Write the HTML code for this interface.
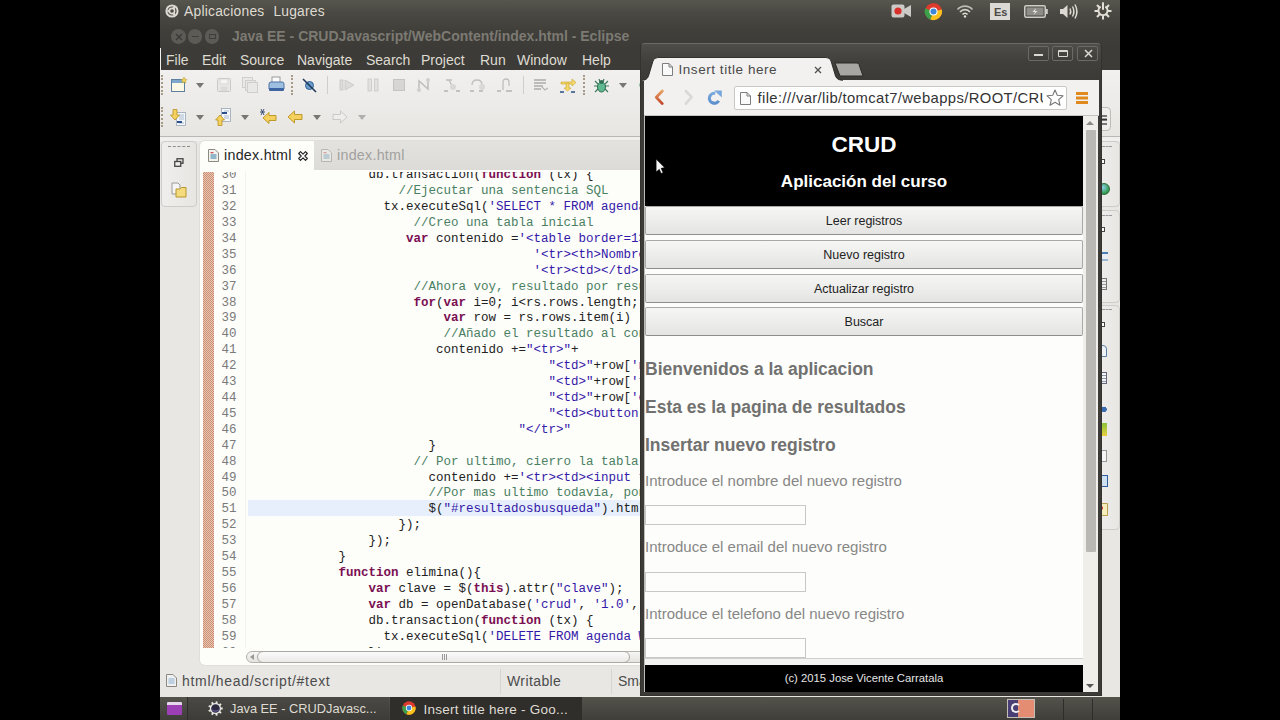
<!DOCTYPE html>
<html><head><meta charset="utf-8">
<style>
*{margin:0;padding:0;box-sizing:border-box}
html,body{width:1280px;height:720px;overflow:hidden;background:#000;font-family:"Liberation Sans",sans-serif}
.a{position:absolute}
.t{position:absolute;white-space:nowrap;line-height:1}
svg{position:absolute;overflow:visible}
#scr{position:absolute;left:160px;top:0;width:960px;height:720px;overflow:hidden;background:#3c3b37}
.mn{position:absolute;top:53px;font-size:14px;color:#dfdbd2;white-space:nowrap;line-height:1}
#code{position:absolute;left:48.5px;top:-3.7px;font-family:"Liberation Mono",monospace;font-size:12.5px;line-height:15.92px;white-space:pre;color:#222}
#code div{height:15.92px}
#code .k{color:#7a0f52;font-weight:bold}
#code .c{color:#4a7f62}
#code .s{color:#3418a8}
#nums{position:absolute;left:10.5px;top:-3.7px;width:26px;text-align:right;font-family:"Liberation Mono",monospace;font-size:12.5px;line-height:15.92px;color:#7a7a7a}
#nums div{height:15.92px}
.dd{position:absolute;width:0;height:0;border-left:4px solid transparent;border-right:4px solid transparent;border-top:5px solid #777673}
.grip{position:absolute;width:2px;border-left:2px dotted #a89a88}
.btn{position:absolute;left:0;width:438px;height:29px;background:linear-gradient(#f6f6f5,#e4e4e2);border:1px solid #a9a9a7;border-bottom-color:#8e8e8c;border-radius:2px;font-size:12.5px;color:#222;text-align:center;line-height:29px}
.h{position:absolute;left:0;font-size:17.5px;font-weight:bold;color:#717170;white-space:nowrap;line-height:1}
.p{position:absolute;left:0;font-size:15px;color:#878786;white-space:nowrap;line-height:1}
.inp{position:absolute;left:0;width:161px;height:20px;background:#fdfdfb;border:1px solid #c8c8c6}
.stk{position:absolute;background:linear-gradient(90deg,#efeeec,#e7e6e3);border:1px solid #cdccc8;border-radius:4px}
.wb{position:absolute;top:46px;width:21px;height:15px;border:1px solid #6b6a65;border-radius:2px;background:linear-gradient(#4a4944,#3f3e3a)}
</style></head><body>
<div id="scr">
  <!-- top panel -->
  <div class="a" style="left:0;top:0;width:960px;height:48px;background:linear-gradient(#57564e 0px,#4a4943 12px,#403f3a 30px,#3c3b37 48px)"></div>
  <svg style="left:5px;top:4px" width="14" height="14" viewBox="0 0 14 14"><circle cx="7" cy="7" r="5.6" fill="none" stroke="#dcd9d2" stroke-width="2"/><circle cx="7" cy="7" r="2.6" fill="none" stroke="#dcd9d2" stroke-width="1.6"/><circle cx="3.5" cy="7" r="1.3" fill="#dcd9d2"/><circle cx="8.9" cy="3.9" r="1.3" fill="#dcd9d2"/><circle cx="8.9" cy="10.1" r="1.3" fill="#dcd9d2"/></svg>
  <div class="t" style="left:24px;top:4.5px;font-size:13.8px;letter-spacing:0.25px;color:#dfdbd2">Aplicaciones</div>
  <div class="t" style="left:113.5px;top:4.5px;font-size:13.8px;letter-spacing:0.2px;color:#dfdbd2">Lugares</div>
  <!-- indicators -->
  <svg style="left:731px;top:4px" width="21" height="14" viewBox="0 0 21 14"><rect x="0.5" y="0.5" width="13" height="13" rx="2" fill="#cbcac6"/><path d="M13 5 L20 1 L20 13 L13 9Z" fill="#cbcac6"/><circle cx="7" cy="7" r="3.6" fill="#d9302c"/></svg>
  <svg style="left:764px;top:2px" width="19" height="19" viewBox="0 0 20 20"><circle cx="10" cy="10" r="9" fill="#dc3b2e"/><path d="M10 10 L18.8 8 A9 9 0 0 1 6.5 18.3Z" fill="#f6c21b"/><path d="M10 10 L6.5 18.3 A9 9 0 0 1 1.2 6.5Z" fill="#3ea149"/><circle cx="10" cy="10" r="4.3" fill="#fff"/><circle cx="10" cy="10" r="3.2" fill="#3d86d9"/></svg>
  <svg style="left:796px;top:4px" width="18" height="14" viewBox="0 0 18 14"><path d="M1.5 5.5 A10 10 0 0 1 16.5 5.5" fill="none" stroke="#bdbbb5" stroke-width="1.6"/><path d="M4 8 A6.5 6.5 0 0 1 14 8" fill="none" stroke="#d6d3cc" stroke-width="1.6"/><path d="M6.5 10.5 A3.2 3.2 0 0 1 11.5 10.5" fill="none" stroke="#dfdcd5" stroke-width="1.6"/><circle cx="9" cy="12.5" r="1.2" fill="#e0ddd6"/></svg>
  <div class="a" style="left:830px;top:3px;width:20px;height:17px;background:#dcdad5"></div>
  <div class="t" style="left:834px;top:7.3px;font-size:11px;font-weight:bold;color:#4a4944">Es</div>
  <svg style="left:864px;top:5px" width="24" height="13" viewBox="0 0 24 13"><rect x="0.75" y="0.75" width="20.5" height="11.5" rx="1.5" fill="none" stroke="#cfcdc7" stroke-width="1.5"/><rect x="22" y="4" width="1.8" height="5" fill="#cfcdc7"/><rect x="2.5" y="2.5" width="17" height="8" fill="#8f8d88"/><path d="M12 3 L8.5 7 L11 7 L9.5 10 L13.5 6 L11 6Z" fill="#e5e3dd"/></svg>
  <svg style="left:899px;top:3px" width="20" height="17" viewBox="0 0 20 17"><path d="M1 6 L4 6 L8.5 2 L8.5 15 L4 11 L1 11Z" fill="#dcd9d2"/><path d="M11 5.5 Q12.5 8.5 11 11.5" fill="none" stroke="#dcd9d2" stroke-width="1.5"/><path d="M13.5 3.5 Q16.2 8.5 13.5 13.5" fill="none" stroke="#dcd9d2" stroke-width="1.5"/><path d="M16 1.5 Q19.8 8.5 16 15.5" fill="none" stroke="#dcd9d2" stroke-width="1.5"/></svg>
  <svg style="left:933.2px;top:1.3px" width="20" height="20" viewBox="0 0 20 20"><g fill="#e2dfd8"><rect x="9" y="1.5" width="2" height="4.5" transform="rotate(45 10 10)"/><rect x="9" y="1.5" width="2" height="4.5" transform="rotate(90 10 10)"/><rect x="9" y="1.5" width="2" height="4.5" transform="rotate(135 10 10)"/><rect x="9" y="1.5" width="2" height="4.5" transform="rotate(180 10 10)"/><rect x="9" y="1.5" width="2" height="4.5" transform="rotate(225 10 10)"/><rect x="9" y="1.5" width="2" height="4.5" transform="rotate(270 10 10)"/><rect x="9" y="1.5" width="2" height="4.5" transform="rotate(315 10 10)"/></g><path d="M7.6 5.6 A4.6 4.6 0 1 0 12.4 5.6" fill="none" stroke="#e2dfd8" stroke-width="1.9"/><rect x="9" y="1.3" width="2" height="7.5" fill="#e2dfd8"/></svg>
  <!-- eclipse title -->
  <div class="a" style="left:11px;top:29px;width:14.6px;height:14.6px;border-radius:50%;background:#5c5b56"></div>
  <svg style="left:14.5px;top:32.5px" width="8" height="8" viewBox="0 0 8 8"><path d="M1 1 L7 7 M7 1 L1 7" stroke="#3a3935" stroke-width="1.4"/></svg>
  <div class="a" style="left:27.7px;top:29px;width:14.6px;height:14.6px;border-radius:50%;background:#5c5b56"></div>
  <div class="a" style="left:31.5px;top:35.7px;width:7px;height:1.5px;background:#3f3e3a"></div>
  <div class="a" style="left:44.7px;top:29px;width:14.6px;height:14.6px;border-radius:50%;background:#5c5b56"></div>
  <div class="a" style="left:48.5px;top:33.5px;width:7px;height:5.5px;border:1.5px solid #3f3e3a"></div>
  <div class="t" style="left:72px;top:28.5px;font-size:14px;font-weight:bold;color:#7c7a73">Java EE - CRUDJavascript/WebContent/index.html - Eclipse</div>
  <!-- menu bar -->
  <div class="a" style="left:0;top:48px;width:960px;height:22px;background:#3c3b37"></div>
  <div class="a" style="left:0;top:48px;width:1px;height:22px;background:#f2f1ee"></div>
  <div class="mn" style="left:6px">File</div>
  <div class="mn" style="left:42px">Edit</div>
  <div class="mn" style="left:80px">Source</div>
  <div class="mn" style="left:137px">Navigate</div>
  <div class="mn" style="left:206px">Search</div>
  <div class="mn" style="left:261px">Project</div>
  <div class="mn" style="left:320px">Run</div>
  <div class="mn" style="left:357px">Window</div>
  <div class="mn" style="left:422px">Help</div>
  <!-- eclipse body -->
  <div class="a" style="left:0;top:70px;width:960px;height:627px;background:#e8e7e4"></div>
  <div class="a" style="left:0;top:70px;width:960px;height:66px;background:linear-gradient(#f1f0ee,#e7e6e3)"></div>
  <div class="a" style="left:0;top:136px;width:960px;height:1px;background:#b9b8b5"></div>
  <div class="a" style="left:0;top:137px;width:960px;height:4px;background:#f0efed"></div>
  <div class="grip" style="left:1px;top:75px;height:20px"></div>
  <div class="grip" style="left:1px;top:107px;height:20px"></div>
  <!-- row1 -->
  <svg style="left:11px;top:77px" width="16" height="16" viewBox="0 0 16 16"><rect x="0.5" y="2.5" width="13" height="12" fill="#fbf8e6" stroke="#5e7f9e"/><rect x="1" y="3" width="12" height="3" fill="#7fa8cc"/><path d="M13 0 L14 2.3 L16 2.5 L14.5 4 L15 6 L13 5 L11 6 L11.5 4 L10 2.5 L12 2.3Z" fill="#f2d35a" stroke="#b99a2a" stroke-width="0.5"/></svg>
  <div class="dd" style="left:36px;top:82.5px"></div>
  <svg style="left:56px;top:77px" width="16" height="16" viewBox="0 0 16 16" opacity="0.35"><rect x="1.5" y="1.5" width="13" height="13" rx="1" fill="#ddd" stroke="#888"/><rect x="4" y="2" width="8" height="5" fill="#fff" stroke="#888" stroke-width="0.6"/><rect x="4.5" y="9.5" width="7" height="4.5" fill="#bbb"/></svg>
  <svg style="left:82px;top:77px" width="16" height="16" viewBox="0 0 16 16" opacity="0.3"><rect x="0.5" y="0.5" width="10" height="10" fill="#ddd" stroke="#888"/><rect x="3.5" y="3.5" width="10" height="10" fill="#ddd" stroke="#888"/><rect x="5.5" y="5.5" width="10" height="10" fill="#ddd" stroke="#888"/></svg>
  <svg style="left:108px;top:76px" width="17" height="17" viewBox="0 0 17 17"><rect x="4" y="1" width="8" height="6" fill="#fafafa" stroke="#9a9a9a"/><path d="M1 8 Q1 6 3 6 L14 6 Q16 6 16 8 L16 13 L1 13Z" fill="#9fbfe0" stroke="#4f74a6"/><rect x="1" y="12" width="15" height="3" rx="1" fill="#3b64a0"/></svg>
  <div class="grip" style="left:131px;top:75px;height:20px"></div>
  <svg style="left:141px;top:77px" width="16" height="16" viewBox="0 0 16 16"><circle cx="8.5" cy="8.5" r="4" fill="#6c9fd0" stroke="#2f5d8e"/><path d="M2 2 L15 15" stroke="#203a5a" stroke-width="1.6"/></svg>
  <div class="a" style="left:167px;top:76px;width:1px;height:18px;background:#cfcecb"></div>
  <svg style="left:179px;top:77px" width="16" height="16" viewBox="0 0 16 16" opacity="0.35"><rect x="1" y="3" width="3" height="10" fill="#bbb" stroke="#777" stroke-width="0.7"/><path d="M6 3 L15 8 L6 13Z" fill="#bbb" stroke="#777" stroke-width="0.7"/></svg>
  <svg style="left:205px;top:77px" width="16" height="16" viewBox="0 0 16 16" opacity="0.35"><rect x="3" y="2" width="3.5" height="12" fill="#ccc" stroke="#777" stroke-width="0.7"/><rect x="9.5" y="2" width="3.5" height="12" fill="#ccc" stroke="#777" stroke-width="0.7"/></svg>
  <svg style="left:231px;top:77px" width="16" height="16" viewBox="0 0 16 16" opacity="0.35"><rect x="2.5" y="2.5" width="11" height="11" fill="#aaa" stroke="#777"/></svg>
  <svg style="left:256px;top:77px" width="16" height="16" viewBox="0 0 16 16" opacity="0.35"><path d="M3 13 L3 4 L12 12 L12 3" fill="none" stroke="#666" stroke-width="1.5"/><circle cx="3" cy="13" r="2" fill="#999"/><circle cx="12" cy="3" r="2" fill="#999"/></svg>
  <svg style="left:284px;top:77px" width="16" height="16" viewBox="0 0 16 16" opacity="0.3"><path d="M2 3 H8 M5 3 L8 9" stroke="#555" stroke-width="1.3" fill="none"/><circle cx="9" cy="10" r="3" fill="#aaa"/><path d="M0 14 H4 M12 14 H16" stroke="#333" stroke-width="1.5"/></svg>
  <svg style="left:310px;top:77px" width="16" height="16" viewBox="0 0 16 16" opacity="0.3"><path d="M2 8 Q2 3 7 3 Q12 3 12 8" stroke="#555" stroke-width="1.3" fill="none"/><circle cx="12" cy="10" r="3" fill="#aaa"/><path d="M0 14 H4 M9 14 H13" stroke="#333" stroke-width="1.5"/></svg>
  <svg style="left:337px;top:77px" width="16" height="16" viewBox="0 0 16 16" opacity="0.3"><path d="M6 13 L6 5 Q6 2 9 2 Q12 2 12 5 L12 9" stroke="#555" stroke-width="1.3" fill="none"/><path d="M0 14 H4 M9 14 H15" stroke="#333" stroke-width="1.5"/></svg>
  <div class="a" style="left:363px;top:76px;width:1px;height:18px;background:#cfcecb"></div>
  <svg style="left:373px;top:77px" width="16" height="16" viewBox="0 0 16 16" opacity="0.55"><path d="M1 3 H13 M1 6 H13 M1 9 H10 M1 12 H8" stroke="#777" stroke-width="1.3"/><path d="M9 10 L12 13 L15 11" stroke="#888" fill="none" stroke-width="1.3"/></svg>
  <svg style="left:400px;top:77px" width="16" height="16" viewBox="0 0 16 16"><path d="M1 5 H12 L12 2 L16 5.5 L12 9 L12 7 H1Z" fill="#f5d86a" stroke="#c9a52a" stroke-width="0.6"/><path d="M6 6 V11 H4 L7.5 14 L11 11 H9 V6Z" fill="#f5d86a" stroke="#c9a52a" stroke-width="0.6"/><path d="M0 15 H4 M11 15 H15" stroke="#2b4f82" stroke-width="1.6"/></svg>
  <div class="grip" style="left:423px;top:75px;height:20px"></div>
  <svg style="left:433px;top:77px" width="17" height="17" viewBox="0 0 17 17"><g stroke="#3e7a5e" stroke-width="1.2"><path d="M2 4 L5 7 M15 4 L12 7 M1 9 H5 M16 9 H12 M2 15 L5 12 M15 15 L12 12 M6 2 L7 5 M11 2 L10 5"/></g><ellipse cx="8.5" cy="10" rx="4" ry="5" fill="#5fb88f" stroke="#2f6e52"/><circle cx="8.5" cy="5" r="2" fill="#2f6e52"/></svg>
  <div class="dd" style="left:458.5px;top:82.5px"></div>
  <svg style="left:478px;top:77px" width="16" height="16" viewBox="0 0 16 16"><circle cx="8" cy="8" r="6" fill="#3aa35c" stroke="#267a42"/></svg>
  <!-- row2 -->
  <svg style="left:10px;top:109px" width="17" height="17" viewBox="0 0 17 17"><rect x="6.5" y="3.5" width="9" height="13" fill="#f3f6fa" stroke="#9aa6b6" stroke-width="0.8"/><path d="M9 6 H14 M9 8 H14 M9 10 H14 M9 14 H14" stroke="#9ab0c8" stroke-width="0.8"/><rect x="7" y="12" width="5" height="2" fill="#2a4f8a"/><path d="M3 0.5 V6 H0.5 L5 11 L9.5 6 H7 V0.5Z" fill="#f4d15e" stroke="#b8911e" stroke-width="0.8"/></svg>
  <div class="dd" style="left:36.0px;top:114.5px"></div>
  <svg style="left:55px;top:108px" width="17" height="18" viewBox="0 0 17 18"><rect x="6.5" y="0.5" width="9" height="13" fill="#f3f6fa" stroke="#9aa6b6" stroke-width="0.8"/><path d="M9 3 H14 M9 8 H14 M9 10 H14" stroke="#9ab0c8" stroke-width="0.8"/><rect x="7" y="4" width="5" height="2" fill="#2a4f8a"/><path d="M3 17.5 V12 H0.5 L5 7 L9.5 12 H7 V17.5Z" fill="#f4d15e" stroke="#b8911e" stroke-width="0.8"/></svg>
  <div class="dd" style="left:81.0px;top:114.5px"></div>
  <svg style="left:100px;top:109px" width="17" height="16" viewBox="0 0 17 16"><path d="M1 0 L4 6 M0 3 L5 3 M1 6 L4 0" stroke="#2a3f6a" stroke-width="0.9"/><path d="M3 9 L9 3.5 V6.5 H16 V11.5 H9 V14.5Z" fill="#f4d15e" stroke="#b8911e" stroke-width="0.9"/></svg>
  <svg style="left:127px;top:109px" width="16" height="16" viewBox="0 0 16 16"><path d="M1 8 L7.5 2 V5.5 H15 V10.5 H7.5 V14Z" fill="#f4d15e" stroke="#b8911e" stroke-width="0.9"/></svg>
  <div class="dd" style="left:153.0px;top:114.5px"></div>
  <svg style="left:172px;top:109px" width="16" height="16" viewBox="0 0 16 16" opacity="0.45"><path d="M15 8 L8.5 2 V5.5 H1 V10.5 H8.5 V14Z" fill="#f4f4f4" stroke="#9a9a9a" stroke-width="0.9"/></svg>
  <div class="dd" style="left:198.0px;top:114.5px;opacity:0.5"></div>

  <!-- left minimized stack -->
  <div class="stk" style="left:1px;top:141px;width:36px;height:66px"></div>
  <div class="a" style="left:8px;top:146px;width:22px;height:0;border-top:1px dashed #8d8c88"></div>
  <svg style="left:14px;top:158px" width="10" height="9" viewBox="0 0 10 9"><rect x="3" y="0.75" width="6" height="4.5" fill="none" stroke="#444" stroke-width="1.3"/><rect x="0.75" y="3.5" width="6" height="4.8" fill="#eeedeb" stroke="#444" stroke-width="1.3"/></svg>
  <svg style="left:11px;top:182px" width="16" height="16" viewBox="0 0 16 16"><path d="M1 1 L7 1 L9 3 L9 12 L1 12Z" fill="#f4f4f4" stroke="#9a9a9a"/><path d="M5 7 L9 7 L10.5 5.5 L15 5.5 L15 15 L5 15Z" fill="#f4dc7e" stroke="#b8962a"/></svg>
  <!-- editor -->
  <div class="a" style="left:40px;top:141px;width:620px;height:524px;background:#fdfdfa;border-radius:5px;overflow:hidden;box-shadow:0 0 0 1px #e0dfdc">
    <div class="a" style="left:114px;top:0;width:520px;height:29px;background:linear-gradient(#e3e2df,#dcdbd8)"></div>
  </div>
  <div class="a" style="left:40px;top:172px;width:600px;height:476px;overflow:hidden">
    <div class="a" style="left:3px;top:0;width:11px;height:476px;background:repeating-conic-gradient(#c98f77 0 25%,#eac6b1 0 50%);background-size:2px 2px"></div>
    <div class="a" style="left:45px;top:0;width:1px;height:476px;background:#f1f1ee"></div>
    <div class="a" style="left:48px;top:328.1px;width:560px;height:15.92px;background:#e6effb"></div>
  </div>
  <div class="a" style="left:40px;top:172px;width:600px;height:476px;overflow:hidden">
    <div id="nums"><div>30</div>
<div>31</div>
<div>32</div>
<div>33</div>
<div>34</div>
<div>35</div>
<div>36</div>
<div>37</div>
<div>38</div>
<div>39</div>
<div>40</div>
<div>41</div>
<div>42</div>
<div>43</div>
<div>44</div>
<div>45</div>
<div>46</div>
<div>47</div>
<div>48</div>
<div>49</div>
<div>50</div>
<div>51</div>
<div>52</div>
<div>53</div>
<div>54</div>
<div>55</div>
<div>56</div>
<div>57</div>
<div>58</div>
<div>59</div>
<div>60</div></div>
    <div id="code"><div>                db.transaction(<span class="k">function</span> (tx) {</div><div>                    <span class="c">//Ejecutar una sentencia SQL</span></div><div>                  tx.executeSql(<span class="s">&#x27;SELECT * FROM agenda&#x27;</span>, [], function</div><div>                      <span class="c">//Creo una tabla inicial</span></div><div>                     <span class="k">var</span> contenido =<span class="s">&#x27;&lt;table border=1&gt;&#x27;+</span></div><div>                                      <span class="s">&#x27;&lt;tr&gt;&lt;th&gt;Nombre&lt;/th&gt;&#x27;</span></div><div>                                      <span class="s">&#x27;&lt;tr&gt;&lt;td&gt;&lt;/td&gt;&#x27;</span></div><div>                      <span class="c">//Ahora voy, resultado por resultado</span></div><div>                      <span class="k">for</span>(<span class="k">var</span> i=0; i&lt;rs.rows.length; i++){</div><div>                          <span class="k">var</span> row = rs.rows.item(i)</div><div>                          <span class="c">//Añado el resultado al contenido</span></div><div>                         contenido +=<span class="s">&quot;&lt;tr&gt;&quot;</span>+</div><div>                                        <span class="s">&quot;&lt;td&gt;&quot;</span>+row[<span class="s">&#x27;nombre&#x27;</span></div><div>                                        <span class="s">&quot;&lt;td&gt;&quot;</span>+row[<span class="s">&#x27;telefono&#x27;</span></div><div>                                        <span class="s">&quot;&lt;td&gt;&quot;</span>+row[<span class="s">&#x27;email&#x27;</span></div><div>                                        <span class="s">&quot;&lt;td&gt;&lt;button clave=&#x27;&quot;</span></div><div>                                    <span class="s">&quot;&lt;/tr&gt;&quot;</span></div><div>                        }</div><div>                      <span class="c">// Por ultimo, cierro la tabla</span></div><div>                        contenido +=<span class="s">&#x27;&lt;tr&gt;&lt;td&gt;&lt;input type=text&gt;&#x27;</span></div><div>                        <span class="c">//Por mas ultimo todavía, pongo</span></div><div class="hl">                        $(<span class="s">&quot;#resultadosbusqueda&quot;</span>).html(contenido)</div><div>                    });</div><div>                });</div><div>            }</div><div>            <span class="k">function</span> elimina(){</div><div>                <span class="k">var</span> clave = $(<span class="k">this</span>).attr(<span class="s">&quot;clave&quot;</span>);</div><div>                <span class="k">var</span> db = openDatabase(<span class="s">&#x27;crud&#x27;</span>, <span class="s">&#x27;1.0&#x27;</span>, </div><div>                db.transaction(<span class="k">function</span> (tx) {</div><div>                  tx.executeSql(<span class="s">&#x27;DELETE FROM agenda WHERE&#x27;</span></div><div>                })</div></div>
  </div>
  <!-- tabs -->
  <svg style="left:48px;top:149px" width="11" height="13" viewBox="0 0 11 13"><path d="M0.5 0.5 L7 0.5 L10.5 4 L10.5 12.5 L0.5 12.5Z" fill="#f4f4ef" stroke="#8c8a7e"/><rect x="2.5" y="5" width="6" height="5" fill="#8fb6c9"/><rect x="2.5" y="3" width="3" height="1.3" fill="#c55"/></svg>
  <div class="t" style="left:64px;top:148px;font-size:14.3px;letter-spacing:0.25px;color:#262626">index.html</div>
  <svg style="left:137.5px;top:150.5px" width="10" height="10" viewBox="0 0 10 10"><path d="M2.5 0.7 L5 3.2 L7.5 0.7 L9.3 2.5 L6.8 5 L9.3 7.5 L7.5 9.3 L5 6.8 L2.5 9.3 L0.7 7.5 L3.2 5 L0.7 2.5Z" fill="#fff" stroke="#1e1e1e" stroke-width="1.1" stroke-linejoin="round"/></svg>
  <svg style="left:161px;top:149px" width="11" height="13" viewBox="0 0 11 13" opacity="0.45"><path d="M0.5 0.5 L7 0.5 L10.5 4 L10.5 12.5 L0.5 12.5Z" fill="#f4f4ef" stroke="#8c8a7e"/><rect x="2.5" y="5" width="6" height="5" fill="#8fb6c9"/><rect x="2.5" y="3" width="3" height="1.3" fill="#c55"/></svg>
  <div class="t" style="left:177px;top:148px;font-size:14.3px;letter-spacing:0.25px;color:#a2a19e">index.html</div>
  <!-- h scrollbar -->
  <div class="a" style="left:86px;top:651px;width:400px;height:12px;border:1px solid #b3b2ae;border-radius:6px;background:linear-gradient(#f6f6f4,#e4e3e0)"></div>
  <div class="a" style="left:97px;top:651px;width:373px;height:12px;border:1px solid #a9a8a4;border-radius:6px;background:linear-gradient(#fbfbfa,#ebeae7)"></div>
  <div class="a" style="left:89.5px;top:654px;width:0;height:0;border-top:3px solid transparent;border-bottom:3px solid transparent;border-right:4px solid #9a9996"></div>
  <div class="a" style="left:282px;top:654px;width:1px;height:6px;background:#999;box-shadow:2px 0 #999,4px 0 #999"></div>
  <!-- status bar -->
  <svg style="left:6px;top:674px" width="11" height="13" viewBox="0 0 11 13"><path d="M0.5 0.5 L7 0.5 L10.5 4 L10.5 12.5 L0.5 12.5Z" fill="#eef0f2" stroke="#8c8a7e"/><path d="M2.5 5 H8.5 M2.5 7 H8.5 M2.5 9 H8.5" stroke="#8db0cf"/></svg>
  <div class="t" style="left:22px;top:674.2px;font-size:14px;color:#4c4c4c;letter-spacing:0.7px">html/head/script/#text</div>
  <div class="a" style="left:340px;top:669px;width:1px;height:25px;background:#d6d5d2"></div>
  <div class="t" style="left:347px;top:674.2px;font-size:14px;color:#4c4c4c;letter-spacing:0.4px">Writable</div>
  <div class="a" style="left:451px;top:669px;width:1px;height:25px;background:#d6d5d2"></div>
  <div class="t" style="left:458px;top:674.2px;font-size:14px;color:#4c4c4c">Sma</div>
  <!-- right side stacks -->
  <div class="a" style="left:933px;top:106.5px;width:17.6px;height:24px;border:1px solid #bdbcb8;border-radius:4px;background:#efeeec"></div>
  <div class="a" style="left:936px;top:115px;width:11px;height:1.5px;background:#777;box-shadow:0 3.6px #333,0 8px #777"></div>
  <div class="stk" style="left:936px;top:141px;width:23.5px;height:66px"></div>
  <div class="stk" style="left:936px;top:210px;width:23.5px;height:93px"></div>
  <div class="stk" style="left:936px;top:305px;width:23.5px;height:225px"></div>
  <div class="a" style="left:942px;top:146px;width:10px;border-top:1px dashed #999"></div>
  <div class="a" style="left:942px;top:214.5px;width:10px;border-top:1px dashed #999"></div>
  <div class="a" style="left:942px;top:309px;width:10px;border-top:1px dashed #999"></div>
  <div class="a" style="left:940px;top:159px;width:5px;height:5px;border:1.3px solid #444;background:#fff"></div>
  <div class="a" style="left:940px;top:227px;width:5px;height:5px;border:1.3px solid #444;background:#fff"></div>
  <div class="a" style="left:940px;top:322px;width:5px;height:5px;border:1.3px solid #444;background:#fff"></div>
  <div class="a" style="left:938px;top:183px;width:12px;height:12px;border-radius:50%;background:radial-gradient(circle at 40% 35%,#8fd0e8,#2f9a4a 70%);border:1px solid #2a6a3a"></div>
  <div class="a" style="left:940px;top:252px;width:8px;height:9px;border-top:2px solid #4a7fb5;border-bottom:2px solid #9ab6d0;background:#e8eef4"></div>
  <div class="a" style="left:940px;top:278px;width:7px;height:12px;border:1px solid #777;background:repeating-linear-gradient(#eee 0 2px,#999 2px 3px)"></div>
  <div class="a" style="left:940px;top:345px;width:7px;height:12px;border:1px solid #5a7fa5;border-radius:0 4px 0 0;background:#eef2f6"></div>
  <div class="a" style="left:940px;top:372px;width:7px;height:12px;border:1px solid #667;background:repeating-linear-gradient(#f4f4f4 0 2px,#8a9ab0 2px 3px)"></div>
  <div class="a" style="left:940px;top:399px;width:7px;height:13px;border-left:1.5px solid #8a7a20;background:radial-gradient(circle at 50% 80%,#3a6ab0 2.5px,transparent 3px)"></div>
  <div class="a" style="left:940px;top:423px;width:7px;height:13px;background:linear-gradient(#8ac43a,#e8d040)"></div>
  <div class="a" style="left:940px;top:450px;width:7px;height:12px;border:1px solid #9a9a9a;background:#f4f6f8"></div>
  <div class="a" style="left:939px;top:475px;width:9px;height:12px;border:1.5px solid #2f5f9f;background:#cfe0f2"></div>
  <div class="a" style="left:940px;top:503px;width:8px;height:13px;border:1px solid #b8a050;background:#f6eebc;border-radius:0 0 0 3px"></div>
  <div class="a" style="left:939px;top:506px;width:4px;height:4px;border-radius:50%;background:#d0202a"></div>
  <!-- taskbar -->
  <div class="a" style="left:0;top:697px;width:960px;height:23px;background:linear-gradient(#53524b,#3f3e39)"></div>
  <div class="a" style="left:6.5px;top:702px;width:15px;height:13px;background:#9c3fb5;border-top:3px solid #e6d6ec;border-radius:1px"></div>
  <div class="a" style="left:27px;top:697px;width:1px;height:23px;background:#2f2e2b"></div>
  <div class="a" style="left:28px;top:697px;width:201px;height:23px;background:linear-gradient(#4a4944,#3d3c38)"></div>
  <svg style="left:47.9px;top:701.3px" width="15" height="15" viewBox="0 0 15 15"><path d="M13.00 6.43 L14.75 6.61 L14.75 8.39 L13.00 8.57 L12.40 10.21 L13.62 11.48 L12.48 12.84 L11.02 11.85 L9.51 12.73 L9.63 14.48 L7.88 14.79 L7.40 13.10 L5.68 12.79 L4.65 14.22 L3.11 13.33 L3.83 11.73 L2.70 10.38 L1.00 10.81 L0.39 9.14 L1.97 8.38 L1.97 6.62 L0.39 5.86 L1.00 4.19 L2.70 4.62 L3.83 3.27 L3.11 1.67 L4.65 0.78 L5.68 2.21 L7.40 1.90 L7.88 0.21 L9.63 0.52 L9.51 2.27 L11.02 3.15 L12.48 2.16 L13.62 3.52 L12.40 4.79Z" fill="#e8e6e0"/><circle cx="7.5" cy="7.5" r="4.3" fill="#2c2940"/><path d="M3.5 8 Q7.5 11 11.5 8 L11.5 9 Q7.5 12.5 3.5 9Z" fill="#6a62a0"/></svg>
  <div class="t" style="left:70px;top:703px;font-size:12.8px;color:#dfdbd2">Java EE - CRUDJavasc...</div>
  <div class="a" style="left:229.8px;top:697px;width:192.6px;height:23px;background:#2f2e2b"></div>
  <svg style="left:241.5px;top:701px" width="14" height="14" viewBox="0 0 20 20"><circle cx="10" cy="10" r="9.5" fill="#dc3b2e"/><path d="M10 10 L19.3 8 A9.5 9.5 0 0 1 6.3 18.8Z" fill="#f6c21b"/><path d="M10 10 L6.3 18.8 A9.5 9.5 0 0 1 1 6.3Z" fill="#3ea149"/><circle cx="10" cy="10" r="4.5" fill="#fff"/><circle cx="10" cy="10" r="3.4" fill="#3d86d9"/></svg>
  <div class="t" style="left:263.5px;top:702.5px;font-size:13.5px;letter-spacing:0.25px;color:#dfdbd2">Insert title here - Goo...</div>
  <div class="a" style="left:847.4px;top:699px;width:27.6px;height:19px;background:#e48d72;border:1px solid #c4beb6"></div>
  <div class="a" style="left:848px;top:700px;width:10px;height:17px;background:#4a3f75"></div>
  <div class="a" style="left:851px;top:703px;width:10px;height:10px;border-radius:50%;border:2px solid #eee;border-right-color:transparent"></div>
  <div class="a" style="left:903px;top:699px;width:1px;height:21px;background:#2e2d2a"></div>
  <div class="a" style="left:932px;top:699px;width:1px;height:21px;background:#2e2d2a"></div>
  <!-- browser -->
  <div class="a" style="left:480px;top:43px;width:462px;height:653px;background:linear-gradient(#4e4d48,#403f3b 18px,#3c3b37 35px);border:1px solid #33322e;border-top-color:#6a6963;border-radius:5px 5px 0 0"></div>
  <div class="wb" style="left:868px"><div class="a" style="left:5px;top:6.5px;width:9px;height:2px;background:#dcd9d2"></div></div>
  <div class="wb" style="left:892px"><div class="a" style="left:5px;top:3px;width:10px;height:7px;border:1.5px solid #dcd9d2;border-top-width:2.5px;border-radius:1px"></div></div>
  <div class="wb" style="left:917px"><svg style="left:5.5px;top:1.8px" width="9" height="9" viewBox="0 0 9 9"><path d="M1 1 L8 8 M8 1 L1 8" stroke="#dcd9d2" stroke-width="1.5"/></svg></div>
  <!-- tab -->
  <svg style="left:674px;top:62px" width="30" height="15" viewBox="0 0 30 15"><path d="M1 1 L23 1 Q24.5 1 25 2.5 L29 14 L6 14 Z" fill="#a7a6a2" stroke="#2b2a27" stroke-width="1"/></svg>
  <div class="a" style="left:484px;top:80px;width:455px;height:36px;background:#f2f1f0"></div><div class="a" style="left:484px;top:115px;width:455px;height:1px;background:#c4c3bf"></div>
  <svg style="left:482px;top:57px" width="202" height="24" viewBox="0 0 202 24"><path d="M0 24 L0 23.3 Q5 23.3 6.5 19 L11 4 Q12 0.5 16 0.5 L184 0.5 Q188 0.5 189 4 L193.5 19 Q195 23.3 201 23.3 L201 24Z" fill="#f2f1f0"/><path d="M0 23.3 Q5 23.3 6.5 19 L11 4 Q12 0.5 16 0.5 L184 0.5 Q188 0.5 189 4 L193.5 19 Q195 23.3 201 23.3" fill="none" stroke="#262522" stroke-width="0.9"/></svg>

  <svg style="left:502px;top:63px" width="11" height="13" viewBox="0 0 11 13"><path d="M0.5 0.5 L7 0.5 L10.5 4 L10.5 12.5 L0.5 12.5Z" fill="#fafafa" stroke="#7d7d7d"/><path d="M7 0.5 V4 H10.5" fill="none" stroke="#7d7d7d"/></svg>
  <div class="t" style="left:518.5px;top:62.5px;font-size:13.5px;color:#4a4a4a;letter-spacing:0.55px">Insert title here</div>
  <svg style="left:654px;top:65.5px" width="8" height="8" viewBox="0 0 8 8"><path d="M1 1 L7 7 M7 1 L1 7" stroke="#505050" stroke-width="1.3"/></svg>
  <!-- toolbar -->
  <svg style="left:494px;top:89px" width="11" height="17" viewBox="0 0 11 17"><defs><linearGradient id="bk" x1="0" y1="0" x2="0" y2="1"><stop offset="0" stop-color="#e6a05e"/><stop offset="1" stop-color="#c4482c"/></linearGradient></defs><path d="M8.3 2 L2.3 8.2 L8.3 14.6" fill="none" stroke="url(#bk)" stroke-width="2.8" stroke-linecap="round" stroke-linejoin="round"/></svg>
  <svg style="left:523px;top:89px" width="11" height="17" viewBox="0 0 11 17"><path d="M2.8 2 L8.6 8.2 L2.8 14.6" fill="none" stroke="#d9d9d7" stroke-width="2.6" stroke-linecap="round" stroke-linejoin="round"/></svg>
  <svg style="left:547px;top:89px" width="17" height="17" viewBox="0 0 17 17"><defs><linearGradient id="rl" x1="0" y1="0" x2="0" y2="1"><stop offset="0" stop-color="#7aa9dc"/><stop offset="1" stop-color="#5b8fcc"/></linearGradient></defs><path d="M11.73 11.7 A5 5 0 1 1 8.27 4.28" fill="none" stroke="url(#rl)" stroke-width="3.1"/><path d="M7.2 1.6 L14.8 1.6 L14.8 8.4Z" fill="#78a8db"/></svg>
  <div class="a" style="left:573.5px;top:85.8px;width:333px;height:24.4px;background:#fff;border:1px solid #c9c8c4;border-radius:2px"></div>
  <svg style="left:580px;top:91.5px" width="11" height="13" viewBox="0 0 11 13"><path d="M0.5 0.5 L7 0.5 L10.5 4 L10.5 12.5 L0.5 12.5Z" fill="#fafafa" stroke="#7d7d7d"/><path d="M7 0.5 V4 H10.5" fill="none" stroke="#7d7d7d"/></svg>
  <div class="a" style="left:597px;top:88px;width:286px;height:20px;overflow:hidden"><div class="t" style="left:0.5px;top:3.2px;font-size:14.8px;letter-spacing:0.38px;color:#333">file:///var/lib/tomcat7/webapps/ROOT/CRUD</div></div>
  <svg style="left:886px;top:89px" width="18" height="18" viewBox="0 0 18 18"><path d="M9 1 L11.3 6.3 L17 6.8 L12.7 10.6 L14 16.3 L9 13.3 L4 16.3 L5.3 10.6 L1 6.8 L6.7 6.3Z" fill="#fff" stroke="#777" stroke-width="1.1" stroke-linejoin="round"/></svg>
  <div class="a" style="left:916px;top:92px;width:12px;height:2.5px;background:#e08a1e;box-shadow:0 4.5px #e08a1e,0 9px #e08a1e"></div>
  <!-- page -->
  <div class="a" style="left:484px;top:116px;width:1px;height:576px;background:#bdbcb8"></div>
  <div class="a" style="left:485px;top:116px;width:438px;height:576px;background:#fdfdfb;overflow:hidden">
    <div class="a" style="left:0;top:0;width:438px;height:90px;background:#000"></div>
    <div class="t" style="left:0;width:438px;text-align:center;font-size:22.5px;font-weight:bold;color:#fff;top:17.5px">CRUD</div>
    <div class="t" style="left:0;width:438px;text-align:center;font-size:17px;font-weight:bold;color:#fff;top:57px">Aplicación del curso</div>
    <div class="btn" style="top:90px">Leer registros</div>
    <div class="btn" style="top:124px">Nuevo registro</div>
    <div class="btn" style="top:158px">Actualizar registro</div>
    <div class="btn" style="top:191px">Buscar</div>
    <div class="h" style="top:245.2px">Bienvenidos a la aplicacion</div>
    <div class="h" style="top:282.7px">Esta es la pagina de resultados</div>
    <div class="h" style="top:321.3px">Insertar nuevo registro</div>
    <div class="p" style="top:357.4px">Introduce el nombre del nuevo registro</div>
    <div class="inp" style="top:389px"></div>
    <div class="p" style="top:423.4px">Introduce el email del nuevo registro</div>
    <div class="inp" style="top:456px"></div>
    <div class="p" style="top:490.4px">Introduce el telefono del nuevo registro</div>
    <div class="inp" style="top:522px"></div>
    <div class="a" style="left:0;top:542px;width:438px;height:7px;background:#f3f3f1;border-top:1px solid #cfcfcd"></div>
    <div class="a" style="left:0;top:549px;width:438px;height:27px;background:#000"></div>
    <div class="t" style="left:0;width:438px;text-align:center;font-size:11.3px;color:#e6e6e6;top:557px">(c) 2015 Jose Vicente Carratala</div>
  </div>
  <svg style="left:496px;top:159px" width="10" height="16" viewBox="0 0 10 16"><path d="M0.2 0.2 L0.2 12.8 L3.3 10.3 L5.2 14.4 L7 13.5 L5 9.3 L8.5 8.6Z" fill="#f4f4f4" stroke="#000" stroke-width="0.4"/></svg>
  <!-- page scrollbar -->
  <div class="a" style="left:923px;top:116px;width:15px;height:576px;background:#efeeeb"></div>
  <div class="a" style="left:925.7px;top:129.5px;width:10.3px;height:422px;background:#b9b8b4;border-radius:1px"></div>
  <div class="a" style="left:926px;top:121px;width:0;height:0;border-left:4px solid transparent;border-right:4px solid transparent;border-bottom:4px solid #8a8986"></div>
  <div class="a" style="left:926px;top:684px;width:0;height:0;border-left:4px solid transparent;border-right:4px solid transparent;border-top:4px solid #555"></div>
</div>
</body></html>
